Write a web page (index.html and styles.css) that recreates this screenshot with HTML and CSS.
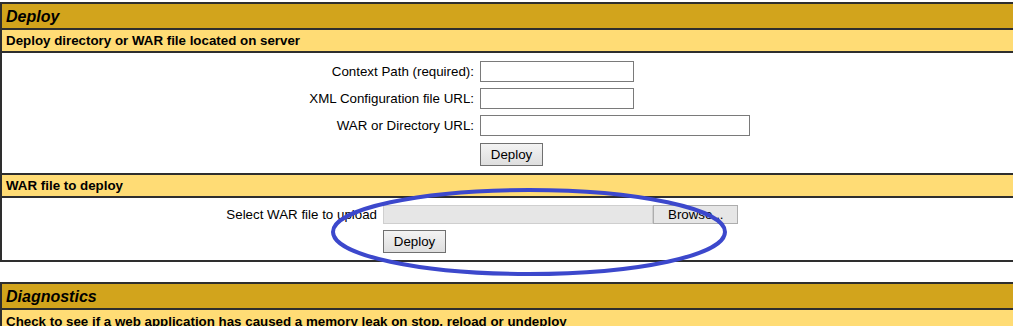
FILE: index.html
```html
<!DOCTYPE html>
<html>
<head>
<meta charset="utf-8">
<title>Tomcat Manager - Deploy</title>
<link rel="stylesheet" href="styles.css">
</head>
<body>
<div class="page">
  <section class="panel">
    <div class="title">Deploy</div>
    <div class="header">Deploy directory or WAR file located on server</div>
    <div class="body body-server">
      <form class="form form-server">
        <label class="lbl">Context Path (required):</label>
        <input class="txt txt-short" type="text">
        <label class="lbl">XML Configuration file URL:</label>
        <input class="txt txt-short" type="text">
        <label class="lbl">WAR or Directory URL:</label>
        <input class="txt txt-long" type="text">
        <span></span>
        <button class="btn" type="button">Deploy</button>
      </form>
    </div>
    <div class="header">WAR file to deploy</div>
    <div class="body body-upload">
      <form class="form form-upload">
        <label class="lbl">Select WAR file to upload</label>
        <div class="file">
          <span class="file-field"></span>
          <span class="file-btn">Browse...</span>
        </div>
        <span></span>
        <button class="btn" type="button">Deploy</button>
      </form>
    </div>
  </section>

  <section class="panel panel-next">
    <div class="title">Diagnostics</div>
    <div class="header">Check to see if a web application has caused a memory leak on stop, reload or undeploy</div>
  </section>

  <svg class="annotation" width="410" height="96" viewBox="0 0 410 96" aria-hidden="true">
    <ellipse cx="204" cy="46" rx="196" ry="42" fill="none" stroke="#3c48cc" stroke-width="4"/>
  </svg>
</div>
</body>
</html>
```

FILE: styles.css
```css
html, body {
  margin: 0;
  padding: 0;
  overflow: hidden;
  background: #ffffff;
}

.page {
  position: relative;
  width: 1040px;
  padding-top: 2px;
  font-family: "Liberation Sans", Arial, sans-serif;
  color: #000000;
}

.panel {
  border-top: 2px solid #2e2e2e;
  border-left: 2px solid #2e2e2e;
}

.panel-next {
  margin-top: 20px;
}

.title {
  height: 21px;
  padding: 3px 4px 0;
  background: #d2a41c;
  font-size: 16px;
  line-height: 19px;
  font-weight: bold;
  font-style: italic;
  border-bottom: 2px solid #2e2e2e;
}

.header {
  height: 18px;
  padding: 3px 4px 0;
  background: #ffdc75;
  font-size: 13.33px;
  line-height: 16px;
  font-weight: bold;
  border-bottom: 2px solid #2e2e2e;
}

.panel-next .header {
  padding-top: 4px;
}

.body {
  background: #ffffff;
  border-bottom: 2px solid #2e2e2e;
}

.body-server {
  padding: 8px 0 7px;
}

.body-upload {
  padding: 7px 0 7px;
}

.form {
  display: grid;
  column-gap: 6px;
  row-gap: 6px;
  align-items: center;
  margin: 0;
}

.form-server {
  grid-template-columns: 472px auto;
}

.form-upload {
  grid-template-columns: 375px auto;
}

.lbl {
  text-align: right;
  font-size: 13.33px;
  line-height: 16px;
}

.txt {
  box-sizing: border-box;
  height: 21px;
  margin: 0;
  padding: 1px 3px;
  border: 1px solid #7a7a7a;
  background: #ffffff;
  font-family: inherit;
  font-size: 13px;
  justify-self: start;
}

.txt-short {
  width: 154px;
}

.txt-long {
  width: 270px;
}

.btn {
  justify-self: start;
  box-sizing: border-box;
  width: 63px;
  height: 23px;
  margin: 1px 0 0;
  padding: 0;
  border: 1px solid #707070;
  border-radius: 0;
  background: linear-gradient(#f3f3f3, #dedede);
  font-family: inherit;
  font-size: 13.33px;
  color: #000000;
}

.body-upload .btn {
  margin-top: 0;
}

.file {
  display: flex;
  justify-self: start;
  height: 19px;
}

.file-field {
  box-sizing: border-box;
  width: 270px;
  height: 19px;
  background: #e6e6e6;
  border: 1px solid #cfcfcf;
}

.file-btn {
  box-sizing: border-box;
  width: 85px;
  height: 19px;
  padding-left: 14px;
  background: #e6e6e6;
  border: 1px solid #adadad;
  font-size: 13.33px;
  line-height: 17px;
}

.annotation {
  position: absolute;
  left: 325px;
  top: 186px;
}
```
